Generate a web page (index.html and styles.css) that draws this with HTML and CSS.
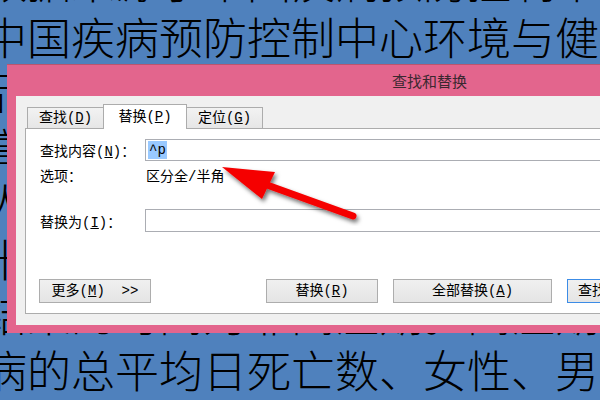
FILE: index.html
```html
<!DOCTYPE html>
<html lang="zh-CN">
<head>
    <meta charset="UTF-8">
    <meta name="viewport" content="width=device-width, initial-scale=1.0">
    <title>查找和替换</title>
    <link rel="stylesheet" href="styles.css">
</head>
<body>

<!-- document text behind the dialog (selected, so it sits on the blue highlight) -->
<div class="doc">
    <p>数据来源于中国疾病预防控制中心的死亡</p>
    <p>中国疾病预防控制中心环境与健康相关产品</p>
    <p>品安全所。研究将每年的五月至九月定义为</p>
    <p>高温期，其余月份为非高温期，分析气温对</p>
    <p>人群死亡的影响。一月开始至四月、十月至</p>
    <p>十二月为低温期，其余从高温期开始到高温</p>
    <p>结束的时间为非高温期。高温期也</p>
    <p>病的总平均日死亡数、女性、男性</p>
</div>

<div class="dialog">
    <div class="titlebar">查找和替换</div>
    <div class="client">
        <div class="tabs">
            <div class="tab">查找(<u>D</u>)</div>
            <div class="tab active">替换(<u>P</u>)</div>
            <div class="tab">定位(<u>G</u>)</div>
        </div>
        <div class="pane">
            <div class="row">
                <span class="label">查找内容(<u>N</u>)：</span>
                <div class="field"><span class="sel">^p</span></div>
            </div>
            <div class="row opts">
                <span class="label">选项：</span>
                <span>区分全/半角</span>
            </div>
            <div class="row replace">
                <span class="label">替换为(<u>I</u>)：</span>
                <div class="field"></div>
            </div>
            <div class="buttons">
                <div class="btn more">更多(<u>M</u>)&nbsp;&nbsp;&gt;&gt;</div>
                <div class="btn one">替换(<u>R</u>)</div>
                <div class="btn all">全部替换(<u>A</u>)</div>
                <div class="btn next">查找下一处(<u>F</u>)</div>
            </div>
        </div>
    </div>
</div>

<!-- red pointer drawn on top of the screenshot -->
<svg class="arrow" width="600" height="400" viewBox="0 0 600 400">
    <defs>
        <filter id="shade" x="-20%" y="-20%" width="140%" height="140%">
            <feDropShadow dx="2" dy="3" stdDeviation="2" flood-color="#000" flood-opacity="0.55"/>
        </filter>
    </defs>
    <g filter="url(#shade)">
        <line x1="256" y1="181" x2="353" y2="216" stroke="#f50000" stroke-width="7" stroke-linecap="round"/>
        <polygon points="222,167 275,172 262,199" fill="#f50000"/>
    </g>
</svg>

</body>
</html>
```

FILE: styles.css
```css
html, body {
    margin: 0;
    width: 600px;
    height: 400px;
    overflow: hidden;
}
body {
    background-color: #4f81bd;
    position: relative;
}
.doc {
    margin: -47px 0 0 -17px;
    font-family: "Noto Sans CJK SC", sans-serif;
    font-weight: 300;
    font-size: 44px;
    line-height: 55.5px;
    color: #000;
    white-space: nowrap;
}
.doc p {
    margin: 0;
    height: 55.5px;
}

/* find & replace window */
.dialog {
    position: absolute;
    left: 7px;
    top: 64px;
    width: 845px;
    height: 268px;
    background-color: #e3658d;
    border-top: 1px solid #b9566f;
    display: flex;
    flex-direction: column;
    font-family: "Liberation Mono", "Noto Sans CJK SC", monospace;
    font-size: 14px;
    color: #000;
}
.titlebar {
    height: 31px;
    display: flex;
    align-items: center;
    justify-content: center;
    font-family: "Noto Sans CJK SC", sans-serif;
    font-size: 15px;
    color: #3b2830;
}
.client {
    flex: 1;
    margin: 0 8px 8px 9px;
    padding: 8px 9px 11px 9px;
    background-color: #f0f0f0;
    display: flex;
    flex-direction: column;
}
.tabs {
    display: flex;
    align-items: flex-end;
    height: 24px;
    padding-left: 2px;
    position: relative;
    z-index: 1;
}
.tab {
    width: 75px;
    height: 20px;
    line-height: 20px;
    text-align: center;
    border: 1px solid #acacac;
    border-bottom: none;
    background: linear-gradient(#f2f2f2, #e6e6e6);
}
.tab.active {
    width: 82px;
    height: 24px;
    line-height: 24px;
    background: #fff;
    margin-bottom: -1px;
    border-left: 1px solid #acacac;
    border-right: 1px solid #acacac;
}
.tab:first-child {
    border-right: none;
}
.tab:last-child {
    border-left: none;
}
.pane {
    flex: 1;
    background: #fff;
    border: 1px solid #acacac;
    padding: 10px 0 10px 14px;
    display: flex;
    flex-direction: column;
}
.row {
    display: flex;
    align-items: center;
    height: 22px;
}
.label {
    width: 105px;
    flex-shrink: 0;
}
.field {
    flex: 1;
    height: 20px;
    border: 1px solid #abadb3;
    display: flex;
    align-items: center;
    padding-left: 2px;
}
.sel {
    background: #99c9ff;
    padding: 0 1px;
    line-height: 18px;
}
.opts {
    margin-top: 3px;
}
.opts span:last-child {
    padding-left: 1px;
}
.replace {
    margin-top: 23px;
    height: 23px;
}
.replace .field {
    height: 21px;
}
.buttons {
    display: flex;
    margin-top: 47px;
    margin-left: -1px;
}
.btn {
    height: 22px;
    line-height: 22px;
    text-align: center;
    border: 1px solid #adadad;
    background: linear-gradient(#f0f0f0, #e5e5e5);
    flex-shrink: 0;
    white-space: nowrap;
}
.more {
    width: 110px;
}
.one {
    width: 110px;
    margin-left: 115px;
}
.all {
    width: 157px;
    margin-left: 15px;
}
.next {
    width: 115px;
    margin-left: 15px;
    border-color: #3c8ce6;
}

.arrow {
    position: absolute;
    left: 0;
    top: 0;
}
```
